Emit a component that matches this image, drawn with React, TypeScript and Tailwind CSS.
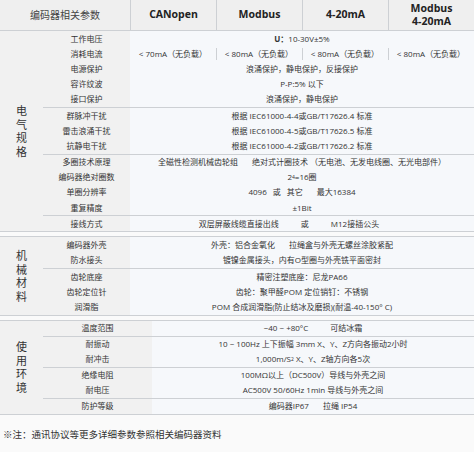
import React from "react";

const FONT = { fontFamily: '"Open Sans", "Noto Sans CJK SC", sans-serif' };

type RowDef = { label: string; content: React.ReactNode };

function Row({ label, content, pw, h }: { label: string; content: React.ReactNode; pw: string; h: string }) {
  return (
    <div className={`flex ${h}`}>
      <div className={`${pw} shrink-0 flex items-center justify-center whitespace-nowrap`}>{label}</div>
      <div className="flex-1 bg-[#f6f8fb] flex items-center justify-center whitespace-nowrap">{content}</div>
    </div>
  );
}

function Section({
  title,
  groups,
  pw,
  h,
}: {
  title: string[];
  groups: RowDef[][];
  pw: string;
  h: string;
}) {
  return (
    <div className="flex bg-[#f1f1f1] border-b border-[#cdd0d4]">
      <div className="w-[43px] shrink-0 flex flex-col items-center justify-center text-[11px] leading-[13.5px] text-[#333]">
        {title.map((c) => (
          <span key={c}>{c}</span>
        ))}
      </div>
      <div className="flex-1 flex flex-col">
        {groups.map((g, gi) => (
          <div key={gi} className={gi > 0 ? "border-t border-[#cdd0d4]" : ""}>
            {g.map((r) => (
              <Row key={r.label} label={r.label} content={r.content} pw={pw} h={h} />
            ))}
          </div>
        ))}
      </div>
    </div>
  );
}

const Gap = () => <div className="h-[5px] bg-[#fafafa] border-b border-[#cdd0d4]" />;

export default function App() {
  const current = (
    <div className="flex w-full h-full items-center">
      {["< 70mA（无负载）", "< 80mA（无负载）", "< 80mA（无负载）", "< 80mA（无负载）"].map((t, i) => (
        <div key={i} className="flex-1 relative flex items-center justify-center h-full">
          {i > 0 && <div className="absolute left-0 top-[2px] h-[12px] border-l border-[#cdd0d4]" />}
          {t}
        </div>
      ))}
    </div>
  );

  const s1: RowDef[][] = [
    [
      {
        label: "工作电压",
        content: (
          <span>
            <b className="font-bold">U：</b>10-30V±5%
          </span>
        ),
      },
      { label: "消耗电流", content: current },
      { label: "电源保护", content: "浪涌保护，静电保护，反接保护" },
      { label: "容许纹波", content: "P-P:5% 以下" },
      { label: "接口保护", content: "浪涌保护，静电保护" },
    ],
    [
      { label: "群脉冲干扰", content: "根据 IEC61000-4-4或GB/T17626.4 标准" },
      { label: "雷击浪涌干扰", content: "根据 IEC61000-4-5或GB/T17626.5 标准" },
      { label: "抗静电干扰", content: "根据 IEC61000-4-2或GB/T17626.2 标准" },
    ],
    [
      {
        label: "多圈技术原理",
        content: (
          <span>
            全磁性检测机械齿轮组<span className="inline-block w-[14px]" />绝对式计圈技术 （无电池、无发电线圈、无光电部件）
          </span>
        ),
      },
      {
        label: "编码器绝对圈数",
        content: (
          <span>
            2<sup className="text-[5px] relative -top-[1px]">4</sup>=16圈
          </span>
        ),
      },
      {
        label: "单圈分辨率",
        content: (
          <span>
            4096<span className="inline-block w-[6px]" />或<span className="inline-block w-[6px]" />其它<span className="inline-block w-[14px]" />最大16384
          </span>
        ),
      },
      { label: "重复精度", content: "±1Bit" },
    ],
    [
      {
        label: "接线方式",
        content: (
          <span className="pr-[26px]">
            双层屏蔽线缆直接出线<span className="inline-block w-[22px]" />或<span className="inline-block w-[22px]" />M12接插公头
          </span>
        ),
      },
    ],
  ];

  const s2: RowDef[][] = [
    [
      {
        label: "编码器外壳",
        content: (
          <span>
            外壳：铝合金氧化<span className="inline-block w-[14px]" />拉绳盒与外壳无螺丝涂胶紧配
          </span>
        ),
      },
      { label: "防水接头", content: "镀镍金属接头，内有O型圈与外壳铣平面密封" },
    ],
    [
      { label: "齿轮底座", content: "精密注塑底座：尼龙PA66" },
      { label: "齿轮定位针", content: "齿轮：聚甲醛POM 定位销钉：不锈钢" },
      { label: "润滑脂", content: "POM 合成润滑脂(防止结冰及磨损)(耐温-40-150° C)" },
    ],
  ];

  const s3: RowDef[][] = [
    [
      {
        label: "温度范围",
        content: (
          <span>
            −40 ~ +80°C<span className="inline-block w-[22px]" />可结冰霜
          </span>
        ),
      },
    ],
    [
      { label: "耐振动", content: "10 ~ 100Hz 上下振幅 3mm X、Y、Z方向各振动2小时" },
      {
        label: "耐冲击",
        content: (
          <span>
            1,000m/S<sup className="text-[5px] relative -top-[1px]">2</sup> X、Y、Z轴方向各5次
          </span>
        ),
      },
    ],
    [
      { label: "绝缘电阻", content: "100MΩ以上（DC500V）导线与外壳之间" },
      { label: "耐电压", content: "AC500V 50/60Hz 1min 导线与外壳之间" },
    ],
    [
      {
        label: "防护等级",
        content: (
          <span>
            编码器IP67<span className="inline-block w-[14px]" />拉绳 IP54
          </span>
        ),
      },
    ],
  ];

  return (
    <div className="w-[474px] h-[452px] bg-[#fafafa] text-[#333] text-[8px] overflow-hidden" style={FONT}>
      <div className="flex h-[31px] bg-[#efefef] border-b border-[#cdd0d4] text-[#222]">
        <div className="w-[130px] flex items-center justify-center text-[10px] text-[#444]">编码器相关参数</div>
        <div className="w-[86px] border-l border-[#cdd0d4] flex items-center justify-center text-[10.5px] font-bold">CANopen</div>
        <div className="w-[86px] border-l border-[#cdd0d4] flex items-center justify-center text-[10.5px] font-bold">Modbus</div>
        <div className="w-[86px] border-l border-[#cdd0d4] flex items-center justify-center text-[10.5px] font-bold">4-20mA</div>
        <div className="flex-1 border-l border-[#cdd0d4] flex flex-col items-center justify-center text-[10.5px] font-bold leading-[13px]">
          <span>Modbus</span>
          <span>4-20mA</span>
        </div>
      </div>
      <Section title={["电", "气", "规", "格"]} groups={s1} pw="w-[87px]" h="h-[15.2px]" />
      <Gap />
      <Section title={["机", "械", "材", "料"]} groups={s2} pw="w-[87px]" h="h-[15.3px]" />
      <Gap />
      <Section title={["使", "用", "环", "境"]} groups={s3} pw="w-[109px]" h="h-[15px]" />
      <div className="pl-[3px] pt-[13px] text-[9.5px] text-[#333]">※注：通讯协议等更多详细参数参照相关编码器资料</div>
    </div>
  );
}
